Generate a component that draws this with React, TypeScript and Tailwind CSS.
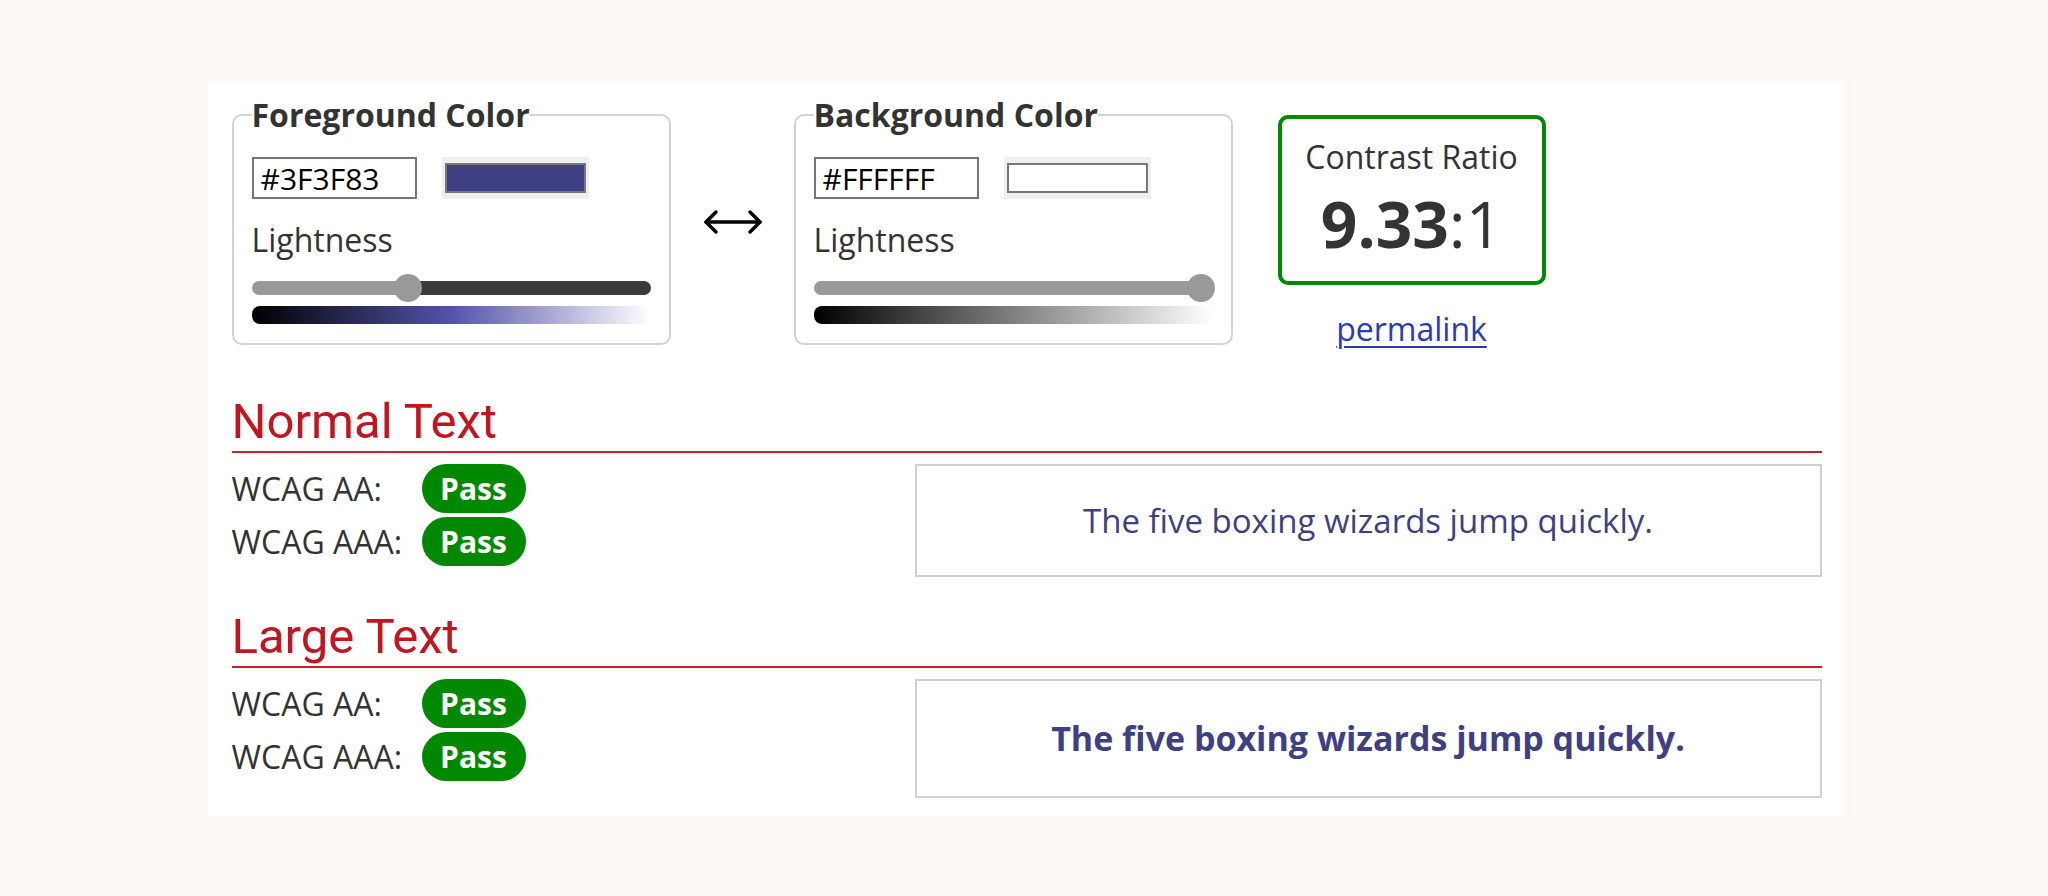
import React from 'react'

const sans = "font-['Open_Sans',_'Noto_Sans',_sans-serif]"

function Swatch({ color }: { color: string }) {
    return (
        <div className="w-[147px] h-[42px] bg-[#efefef] px-[3px] py-[6px]">
            <div className="w-full h-full border-2 border-[#777]" style={{ backgroundColor: color }} />
        </div>
    )
}

function ColorField({
    title,
    hex,
    thumbLeft,
    trackClass,
    gradientClass,
}: {
    title: string
    hex: string
    thumbLeft: number
    trackClass: string
    gradientClass: string
}) {
    return (
        <fieldset className="w-[439px] border-2 border-[#d2d2d2] rounded-[10px] px-[18px] pt-[18px] pb-[19px]">
            <legend className="text-[32px] font-bold leading-normal text-[#333]">{title}</legend>
            <div className="flex items-center gap-[25px]">
                <input
                    readOnly
                    value={hex}
                    className="w-[165px] h-[42px] border-2 border-[#767676] px-[7px] text-[30px] leading-none text-black outline-none"
                />
                <Swatch color={hex} />
            </div>
            <div className="mt-[17px] text-[32px] leading-normal text-[#333]">Lightness</div>
            <div className="relative mt-[10px] h-[28px] flex items-center">
                <div className={`w-full h-[14px] rounded-full ${trackClass}`} />
                {/* thumb sits on the track */}
                <div
                    className="absolute top-0 w-[28px] h-[28px] rounded-full bg-[#999]"
                    style={{ left: thumbLeft }}
                />
            </div>
            <div className={`mt-[4px] h-[18px] rounded-l-[8px] ${gradientClass}`} />
        </fieldset>
    )
}

function SwapArrow() {
    return (
        <svg width="62" height="30" viewBox="0 0 62 30" className="mt-[116px] shrink-0 ml-[31px] mr-[30px]">
            <path d="M4 15 H58" stroke="#000" strokeWidth="3.5" strokeLinecap="round" />
            <path d="M14 5 L4 15 L14 25" fill="none" stroke="#000" strokeWidth="3.5" strokeLinecap="round" strokeLinejoin="round" />
            <path d="M48 5 L58 15 L48 25" fill="none" stroke="#000" strokeWidth="3.5" strokeLinecap="round" strokeLinejoin="round" />
        </svg>
    )
}

function PassRow({ label }: { label: string }) {
    return (
        <div className="flex items-center">
            <div className="w-[190px] text-[32px] leading-normal text-[#333]">{label}</div>
            <div className="w-[104px] h-[49px] rounded-full bg-[#008800] flex items-center justify-center text-[30px] font-bold leading-none text-white">
                Pass
            </div>
        </div>
    )
}

function Section({ title, bold, boxHeight }: { title: string; bold?: boolean; boxHeight: string }) {
    return (
        <>
            <h2 className="font-['Roboto',_'Liberation_Sans',_sans-serif] text-[49px] leading-[48px] text-[#c1151f] border-b-2 border-[#c8202b] pb-[5px]">
                {title}
            </h2>
            <div className="mt-[11px] flex justify-between items-start">
                <div className="flex flex-col gap-[4px]">
                    <PassRow label="WCAG AA:" />
                    <PassRow label="WCAG AAA:" />
                </div>
                <div
                    className={`w-[907px] ${boxHeight} border-2 border-[#d0d0d0] flex items-center justify-center leading-normal text-[#3f3f83] ${bold ? 'text-[34px] font-bold' : 'text-[33px]'}`}
                >
                    The five boxing wizards jump quickly.
                </div>
            </div>
        </>
    )
}

export default function App() {
    return (
        <div className={`min-h-screen bg-[#fff9f6] pt-[81px] ${sans}`}>
            <div className="mx-auto w-[1635px] h-[735px] bg-white pl-[25px] pr-[20px] pt-[10px]">
                {/* Top controls */}
                <div className="flex items-start h-[259px]">
                    <ColorField
                        title="Foreground Color"
                        hex="#3F3F83"
                        thumbLeft={142}
                        trackClass="bg-[linear-gradient(to_right,#999_38%,#3b3b3b_38%)]"
                        gradientClass="bg-[linear-gradient(to_right,#000,#5353ac,#fff)]"
                    />
                    <SwapArrow />
                    <ColorField
                        title="Background Color"
                        hex="#FFFFFF"
                        thumbLeft={373}
                        trackClass="bg-[#999]"
                        gradientClass="bg-[linear-gradient(to_right,#000,#808080,#fff)]"
                    />
                    <div className="ml-[45px] mt-[24px] w-[268px] flex flex-col items-center">
                        <div className="w-full h-[170px] border-[4px] border-[#008800] rounded-[10px] flex flex-col items-center pt-[14px] text-[#333]">
                            <div className="text-[32px] leading-normal">Contrast Ratio</div>
                            <div className="mt-[11px] text-[64px] leading-none">
                                <span className="font-bold">9.33</span>:1
                            </div>
                        </div>
                        <a
                            href="#"
                            className="mt-[20px] text-[32px] leading-normal text-[#2b3bb0] underline decoration-2 underline-offset-[5px]"
                        >
                            permalink
                        </a>
                    </div>
                </div>

                <div className="mt-[48px]">
                    <Section title="Normal Text" boxHeight="h-[113px]" />
                </div>
                <div className="mt-[36px]">
                    <Section title="Large Text" bold boxHeight="h-[119px]" />
                </div>
            </div>
        </div>
    )
}
